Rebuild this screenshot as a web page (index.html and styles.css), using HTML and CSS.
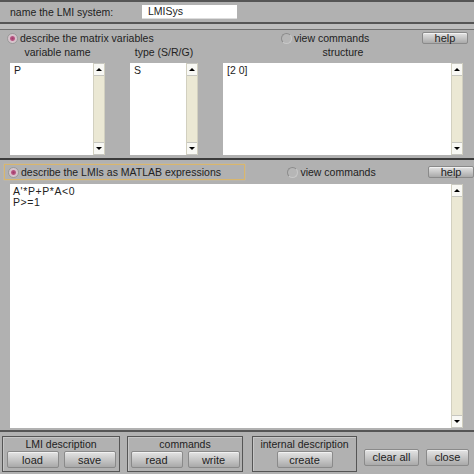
FILE: index.html
```html
<!DOCTYPE html>
<html lang="en">
<head>
    <meta charset="UTF-8">
    <title>LMI Editor</title>
    <link rel="stylesheet" href="styles.css">
</head>
<body>
    <div class="window">
        <div class="name-bar">
            <span class="name-label">name the LMI system:</span>
            <div class="field">LMISys</div>
        </div>
        <div class="band"></div>

        <div class="panel vars">
            <div class="panel-head">
                <div class="radio-box first"><span class="radio on"></span>describe the matrix variables</div>
                <div class="radio-box view"><span class="radio"></span>view commands</div>
                <button class="btn help">help</button>
            </div>
            <div class="cols">
                <div class="col col-name">
                    <div class="col-title">variable name</div>
                    <div class="list">
                        <div class="list-body">P</div>
                        <div class="scroll"><span class="arrow up"></span><span class="arrow down"></span></div>
                    </div>
                </div>
                <div class="col col-type">
                    <div class="col-title">type (S/R/G)</div>
                    <div class="list">
                        <div class="list-body">S</div>
                        <div class="scroll"><span class="arrow up"></span><span class="arrow down"></span></div>
                    </div>
                </div>
                <div class="col col-struct">
                    <div class="col-title">structure</div>
                    <div class="list">
                        <div class="list-body">[2 0]</div>
                        <div class="scroll"><span class="arrow up"></span><span class="arrow down"></span></div>
                    </div>
                </div>
            </div>
        </div>
        <div class="divider"></div>

        <div class="panel lmis">
            <div class="panel-head">
                <div class="radio-box first focused"><span class="radio on"></span>describe the LMIs as MATLAB expressions</div>
                <div class="radio-box view"><span class="radio"></span>view commands</div>
                <button class="btn help">help</button>
            </div>
            <div class="editor">
                <div class="editor-body">A'*P+P*A&lt;0<br>P&gt;=1</div>
                <div class="scroll"><span class="arrow up"></span><span class="arrow down"></span></div>
            </div>
        </div>
        <div class="divider thin"></div>

        <div class="bottom">
            <div class="group g-desc">
                <div class="group-title">LMI description</div>
                <div class="group-btns">
                    <button class="btn">load</button>
                    <button class="btn">save</button>
                </div>
            </div>
            <div class="group g-cmd">
                <div class="group-title">commands</div>
                <div class="group-btns">
                    <button class="btn">read</button>
                    <button class="btn">write</button>
                </div>
            </div>
            <div class="group g-int">
                <div class="group-title">internal description</div>
                <div class="group-btns">
                    <button class="btn create">create</button>
                </div>
            </div>
            <button class="btn clear">clear all</button>
            <button class="btn close">close</button>
        </div>
    </div>
</body>
</html>
```

FILE: styles.css
```css
body {
    margin: 0;
    background: #b1b1b1;
    font-family: "Liberation Sans", Arial, sans-serif;
    font-size: 10.5px;
    color: #222;
}
.window {
    width: 474px;
    height: 474px;
    overflow: hidden;
}

/* name of the system */
.name-bar {
    display: flex;
    align-items: center;
    height: 20px;
    padding-left: 10px;
    border-top: 2px solid #555;
    border-bottom: 2px solid #555;
}
.name-label {
    width: 132px;
}
.field {
    width: 89px;
    height: 13px;
    line-height: 13px;
    padding-left: 6px;
    background: #fff;
    border-bottom: 1px solid #ddd;
}
.band {
    height: 5px;
    background: #bdbdbd;
    border-bottom: 1px solid #707070;
}

/* panel headers */
.panel-head {
    display: flex;
    align-items: center;
    height: 16px;
}
.radio-box {
    display: flex;
    align-items: center;
    box-sizing: border-box;
    height: 16px;
}
.radio-box.first {
    width: 281px;
    padding-left: 7px;
}
.radio-box.view {
    width: 134px;
}
.radio {
    width: 9px;
    height: 9px;
    margin-right: 2px;
    border-radius: 50%;
    border: 1px solid #8c8c8c;
    border-right-color: #c8c8c8;
    border-bottom-color: #c8c8c8;
    background: #b6b6b6;
}
.radio.on {
    background: radial-gradient(circle, #a03a6a 0, #b85a85 2px, #d9c2cc 3px, #d2c8cc 5px);
    border-color: #9a9a9a;
}
.focused {
    border: 1px solid #d9b66c;
    box-shadow: 0 0 1px #e6c88a;
}

.btn {
    box-sizing: border-box;
    padding: 0;
    font-family: inherit;
    font-size: 11px;
    color: #222;
    background: linear-gradient(#e4e4e4, #c4c4c4 55%, #a9a9a9);
    border: 1px solid #8a8a8a;
    border-radius: 2px;
    box-shadow: inset 0 1px 0 #f2f2f2;
}
.help {
    width: 46px;
    height: 12px;
    line-height: 10px;
    margin-left: 7px;
}

/* matrix variables */
.vars {
    height: 128px;
}
.cols {
    display: flex;
    padding-left: 10px;
    gap: 25px;
}
.col-name {
    width: 95px;
}
.col-type {
    width: 68px;
}
.col-struct {
    width: 240px;
}
.col-title {
    height: 17px;
    line-height: 12px;
    text-align: center;
}
.list {
    display: flex;
    height: 92px;
    background: #fff;
}
.list-body {
    flex: 1;
    padding: 2px 4px;
    line-height: 11px;
}

.scroll {
    display: flex;
    flex-direction: column;
    justify-content: space-between;
    box-sizing: border-box;
    width: 12px;
    background: #ebe8d4;
    border-left: 1px solid #d2d0c0;
    border-right: 1px solid #d2d0c0;
}
.arrow {
    display: flex;
    justify-content: center;
    align-items: center;
    height: 11px;
    background: #f8f8f4;
    border-top: 1px solid #c6c6c0;
    border-bottom: 1px solid #c6c6c0;
}
.arrow::before {
    content: "";
    border-left: 3px solid transparent;
    border-right: 3px solid transparent;
}
.arrow.up::before {
    border-bottom: 3px solid #000;
}
.arrow.down::before {
    border-top: 3px solid #000;
}

.divider {
    height: 2px;
    background: #3c3c3c;
}
.divider.thin {
    margin-top: 2px;
    height: 2px;
    background: #555;
}

/* LMI expressions */
.lmis .panel-head {
    margin-top: 4px;
}
.lmis .radio-box.first {
    width: 242px;
    margin-left: 4px;
    padding-left: 3px;
}
.lmis .radio-box.view {
    margin-left: 42px;
}
.editor {
    display: flex;
    height: 244px;
    margin: 4px 11px 0 10px;
    background: #fff;
}
.editor-body {
    flex: 1;
    padding: 2px 3px;
    line-height: 11px;
    letter-spacing: 0.6px;
}

/* bottom buttons */
.bottom {
    display: flex;
    align-items: center;
    height: 42px;
    padding-left: 2px;
    padding-top: 2px;
    box-sizing: border-box;
}
.group {
    box-sizing: border-box;
    height: 36px;
    border: 1px solid #555;
    box-shadow: inset 1px 1px 0 #c6c6c6;
    text-align: center;
}
.group-title {
    height: 14px;
    line-height: 14px;
}
.group-btns {
    display: flex;
    justify-content: center;
    gap: 5px;
}
.group-btns .btn {
    width: 52px;
    height: 17px;
}
.g-desc {
    width: 118px;
}
.g-cmd {
    width: 116px;
    margin-left: 7px;
}
.g-int {
    width: 105px;
    margin-left: 9px;
}
.group-btns .create {
    width: 56px;
}
.clear {
    width: 55px;
    height: 17px;
    margin-left: 7px;
    margin-top: 6px;
}
.close {
    width: 43px;
    height: 17px;
    margin-left: 7px;
    margin-top: 6px;
}
```
